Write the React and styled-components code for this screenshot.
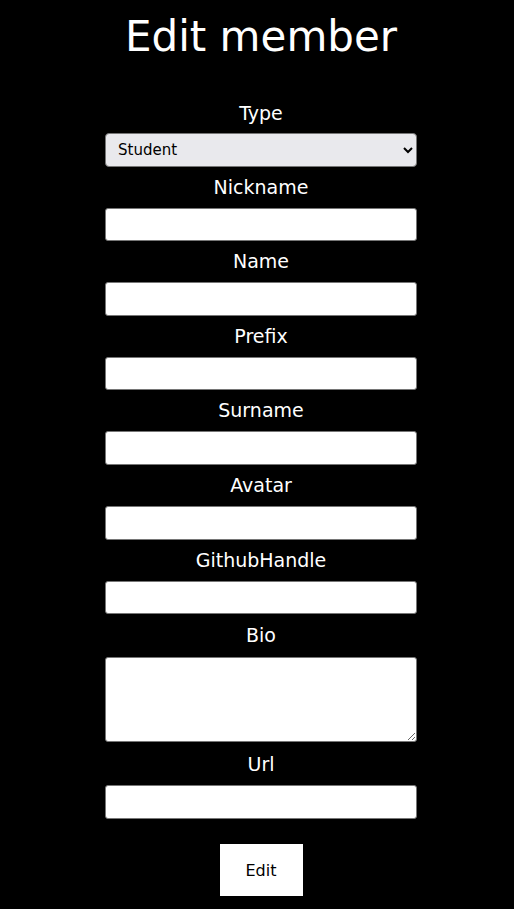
import styled, { createGlobalStyle } from "styled-components";

const fields = [
  { name: "nickname", label: "Nickname" },
  { name: "name", label: "Name" },
  { name: "prefix", label: "Prefix" },
  { name: "surname", label: "Surname" },
  { name: "avatar", label: "Avatar" },
  { name: "githubHandle", label: "GithubHandle" },
];

const App = () => {
  const handleSubmit = (e) => {
    e.preventDefault();
  };

  return (
    <>
      <GlobalStyle />
      <StPage>
        <StH1>Edit member</StH1>
        <StForm onSubmit={handleSubmit}>
          <StLabel htmlFor="type" $top="40px" $bottom="8px">
            Type
          </StLabel>
          <StSelect id="type" name="type" defaultValue="student">
            <option value="student">Student</option>
            <option value="mentor">Mentor</option>
          </StSelect>
          {fields.map((field) => (
            <StField key={field.name}>
              <StLabel htmlFor={field.name}>{field.label}</StLabel>
              <StInput id={field.name} type="text" name={field.name} />
            </StField>
          ))}
          <StLabel htmlFor="bio" $top="10px" $bottom="10px">
            Bio
          </StLabel>
          <StTextarea id="bio" name="bio" />
          <StLabel htmlFor="url">Url</StLabel>
          <StInput id="url" type="text" name="url" />
          <StBtn type="submit">Edit</StBtn>
        </StForm>
      </StPage>
    </>
  );
};

const GlobalStyle = createGlobalStyle`
  html, body {
    margin: 0;
    background-color: #000;
  }
  body {
    font-family: "DejaVu Sans", "Liberation Sans", sans-serif;
    color: #fff;
  }
`;

const StPage = styled.main`
  box-sizing: border-box;
  width: 100%;
  padding: 0 0 0 8px;
  display: flex;
  flex-direction: column;
  align-items: center;
`;

const StH1 = styled.h1`
  margin: 12px 0 0;
  font-size: 42px;
  line-height: 50px;
  font-weight: 400;
`;

const StForm = styled.form`
  display: flex;
  flex-direction: column;
  align-items: center;
  width: 312px;
`;

const StField = styled.div`
  display: flex;
  flex-direction: column;
  align-items: center;
  width: 100%;
`;

const StLabel = styled.label`
  display: block;
  margin: ${(props) => props.$top || "9px"} 0 ${(props) => props.$bottom || "9px"};
  font-size: 19px;
  line-height: 23px;
`;

const StSelect = styled.select`
  box-sizing: border-box;
  width: 312px;
  height: 33.5px;
  padding: 0 8px;
  font-family: "DejaVu Sans", sans-serif;
  font-size: 15px;
  color: #000;
  background-color: #e9e9ed;
  border: 1px solid #767676;
  border-radius: 4px;
`;

const StInput = styled.input`
  box-sizing: border-box;
  width: 312px;
  height: 33.67px;
  padding: 0 8px;
  font-family: "DejaVu Sans", sans-serif;
  font-size: 15px;
  background-color: #fff;
  border: 1px solid #767676;
  border-radius: 3px;
`;

const StTextarea = styled.textarea`
  box-sizing: border-box;
  width: 312px;
  height: 85px;
  margin-bottom: 2px;
  padding: 4px 8px;
  font-family: "DejaVu Sans", sans-serif;
  font-size: 15px;
  background-color: #fff;
  border: 1px solid #767676;
  border-radius: 3px;
`;

const StBtn = styled.button`
  width: 83px;
  height: 52px;
  margin-top: 25px;
  font-family: "DejaVu Sans", sans-serif;
  font-size: 16px;
  color: #000;
  background-color: #fff;
  border: none;
  border-radius: 0;
  cursor: pointer;
  &:hover {
    background-color: #eee;
  }
`;

export default App;
